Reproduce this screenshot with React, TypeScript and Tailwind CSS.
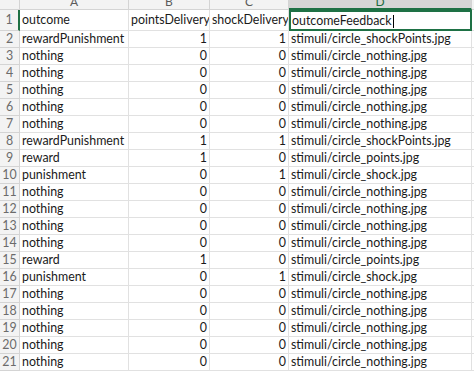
import React from "react";

const rows: [string, number, number, string][] = [
  ["rewardPunishment", 1, 1, "stimuli/circle_shockPoints.jpg"],
  ["nothing", 0, 0, "stimuli/circle_nothing.jpg"],
  ["nothing", 0, 0, "stimuli/circle_nothing.jpg"],
  ["nothing", 0, 0, "stimuli/circle_nothing.jpg"],
  ["nothing", 0, 0, "stimuli/circle_nothing.jpg"],
  ["nothing", 0, 0, "stimuli/circle_nothing.jpg"],
  ["rewardPunishment", 1, 1, "stimuli/circle_shockPoints.jpg"],
  ["reward", 1, 0, "stimuli/circle_points.jpg"],
  ["punishment", 0, 1, "stimuli/circle_shock.jpg"],
  ["nothing", 0, 0, "stimuli/circle_nothing.jpg"],
  ["nothing", 0, 0, "stimuli/circle_nothing.jpg"],
  ["nothing", 0, 0, "stimuli/circle_nothing.jpg"],
  ["nothing", 0, 0, "stimuli/circle_nothing.jpg"],
  ["reward", 1, 0, "stimuli/circle_points.jpg"],
  ["punishment", 0, 1, "stimuli/circle_shock.jpg"],
  ["nothing", 0, 0, "stimuli/circle_nothing.jpg"],
  ["nothing", 0, 0, "stimuli/circle_nothing.jpg"],
  ["nothing", 0, 0, "stimuli/circle_nothing.jpg"],
  ["nothing", 0, 0, "stimuli/circle_nothing.jpg"],
  ["nothing", 0, 0, "stimuli/circle_nothing.jpg"],
];

const cols = "grid-cols-[20px_109px_81px_79px_183px_1fr]";

function Cell({ children, right, className = "" }: { children?: React.ReactNode; right?: boolean; className?: string }) {
  return (
    <div
      className={`flex items-center overflow-hidden whitespace-nowrap border-r border-b border-[#e1e1e1] px-[2px] pt-[1px] ${
        right ? "justify-end" : "justify-start"
      } ${className}`}
    >
      {children}
    </div>
  );
}

function RowNum({ n, active }: { n: number; active?: boolean }) {
  return (
    <div
      className={`flex items-center justify-center border-b border-[#d4d4d4] bg-[#f3f3f3] pt-[1px] text-[#6b6b6b] ${
        active ? "border-r-2 border-r-[#1e7145]" : "border-r border-r-[#d4d4d4]"
      }`}
    >
      {n}
    </div>
  );
}

export default function App() {
  return (
    <div
      className="h-[374px] w-[474px] overflow-hidden bg-white text-[12.4px] leading-none text-[#1a1a1a]"
      style={{ fontFamily: "Lato, 'Noto Sans', sans-serif" }}
    >
      {/* Column header */}
      <div className={`grid ${cols} h-[10px] text-[12px] text-[#5a5a5a]`}>
        <div className="border-r border-b border-[#d4d4d4] bg-[#f3f3f3]" />
        {["A", "B", "C"].map((l) => (
          <div key={l} className="flex items-end justify-center overflow-hidden border-r border-b border-[#d4d4d4] bg-[#f3f3f3]">
            <span className="mb-[1px] leading-none">{l}</span>
          </div>
        ))}
        <div className="flex items-end justify-center overflow-hidden border-r border-[#d4d4d4] border-b-2 border-b-[#1e7145] bg-[#d6d6d6] text-[#1e6b41]">
          <span className="leading-none">D</span>
        </div>
        <div className="border-b border-[#d4d4d4] bg-[#f3f3f3]" />
      </div>

      {/* Row 1 */}
      <div className={`grid ${cols} h-[21px]`}>
        <RowNum n={1} active />
        <Cell>outcome</Cell>
        <Cell>pointsDelivery</Cell>
        <Cell>shockDelivery</Cell>
        <div className="flex items-center whitespace-nowrap border-2 border-[#1e7145] px-[1px] pt-[1px]">
          outcomeFeedback
          <span className="ml-[1px] inline-block h-[13px] w-[1px] bg-black" />
        </div>
        <Cell />
      </div>

      {rows.map((r, i) => (
        <div key={i} className={`grid ${cols} h-[17px]`}>
          <RowNum n={i + 2} />
          <Cell>{r[0]}</Cell>
          <Cell right>{r[1]}</Cell>
          <Cell right>{r[2]}</Cell>
          <Cell>{r[3]}</Cell>
          <Cell />
        </div>
      ))}
    </div>
  );
}
